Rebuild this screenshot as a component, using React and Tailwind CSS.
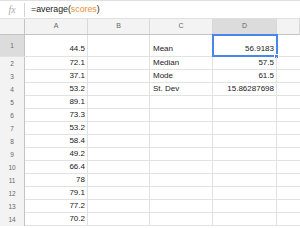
import React from 'react';

const colA = ['44.5', '72.1', '37.1', '53.2', '89.1', '73.3', '53.2', '58.4', '49.2', '66.4', '78', '79.1', '77.2', '70.2'];
const stats = [
  ['Mean', '56.9183'],
  ['Median', '57.5'],
  ['Mode', '61.5'],
  ['St. Dev', '15.86287698'],
];

const cols = 'grid grid-cols-[25px_63px_62px_63px_64px_1fr]';

const App = () => {
  return (
    <div className="w-[300px] h-[228px] overflow-hidden bg-white text-[#222] font-['Liberation_Sans',Arial,sans-serif]">
      {/* Formula bar */}
      <div className="h-[19px] flex items-center border-t border-b border-[#e0e0e0]">
        <div className="w-[25px] h-[14px] flex items-center justify-center border-r border-[#d4d4d4]">
          <span className="font-['Liberation_Serif',serif] italic text-[10px] text-[#aaa] leading-none">fx</span>
        </div>
        <div className="pl-[6px] text-[8.8px] leading-none text-[#222]">
          =average(<span className="text-[#e69138]">scores</span>)
        </div>
      </div>

      {/* Column headers */}
      <div className={`${cols} h-[16px] bg-[#f3f3f3] border-b border-[#c4c4c4] text-[7px] text-[#666]`}>
        <div className="border-r border-[#c4c4c4]" />
        {['A', 'B', 'C', 'D', ''].map((c, i) => (
          <div
            key={i}
            className={`flex items-center justify-center border-r border-[#d8d8d8] ${c === 'D' ? 'bg-[#dcdcdc]' : ''}`}
          >
            {c}
          </div>
        ))}
      </div>

      {/* Rows */}
      {colA.map((v, i) => {
        const s = stats[i];
        const first = i === 0;
        return (
          <div
            key={i}
            className={`${cols} ${first ? 'h-[22px]' : 'h-[13px]'} border-b border-[#e2e2e2] text-[8px]`}
          >
            <div
              className={`flex items-center justify-center text-[6.5px] text-[#666] border-r border-[#c4c4c4] ${first ? 'bg-[#dcdcdc]' : 'bg-[#f3f3f3]'}`}
            >
              {i + 1}
            </div>
            <div className="flex items-end justify-end pr-[2px] pb-[1px] border-r border-[#e2e2e2]">{v}</div>
            <div className="border-r border-[#e2e2e2]" />
            <div className="flex items-end pl-[3px] pb-[1px] border-r border-[#e2e2e2]">{s ? s[0] : ''}</div>
            <div
              className={`relative flex items-end justify-end pr-[2px] pb-[1px] border-r border-[#e2e2e2] ${first ? 'outline-2 outline-[#4a86e8] -outline-offset-1' : ''}`}
            >
              {s ? s[1] : ''}
              {first && (
                <div className="absolute right-[-3px] bottom-[-3px] w-[5px] h-[5px] bg-[#4a86e8] border border-white" />
              )}
            </div>
            <div />
          </div>
        );
      })}
    </div>
  );
};

export default App;
